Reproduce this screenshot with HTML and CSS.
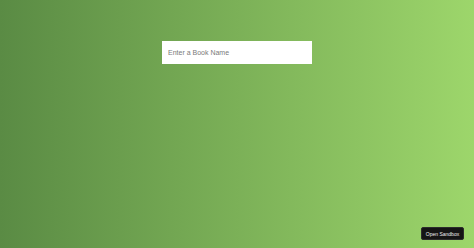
FILE: index.html
```html
<!DOCTYPE html>
<html lang="en">
<head>
<meta charset="utf-8">
<title>Book Search</title>
<link rel="stylesheet" href="styles.css">
</head>
<body>
<main class="app">
  <input class="search" type="text" placeholder="Enter a Book Name" autofocus>
</main>
<a class="sandbox-btn" href="#">Open Sandbox</a>
</body>
</html>
```
FILE: styles.css
```css
html, body {
  margin: 0;
  padding: 0;
  height: 100%;
}
body {
  background: linear-gradient(to right, #5a8b44, #9dd66b);
  font-family: "Liberation Sans", Arial, sans-serif;
  overflow: hidden;
}
.app {
  display: flex;
  justify-content: center;
  padding-top: 41px;
}
.search {
  box-sizing: border-box;
  width: 150px;
  height: 23px;
  border: none;
  outline: none;
  background: #fff;
  padding: 0 5px 0 6px;
  font-family: "Liberation Sans", Arial, sans-serif;
  font-size: 7px;
  color: #333;
  caret-color: #222;
}
.search::placeholder {
  color: #7a7a7a;
}
.sandbox-btn {
  position: fixed;
  right: 10px;
  bottom: 8px;
  width: 43px;
  height: 13px;
  box-sizing: border-box;
  display: flex;
  align-items: center;
  justify-content: center;
  background: #151515;
  border: 1px solid #2c2c2c;
  border-radius: 2px;
  color: #f0f0f0;
  font-size: 5px;
  text-decoration: none;
  white-space: nowrap;
}
```
